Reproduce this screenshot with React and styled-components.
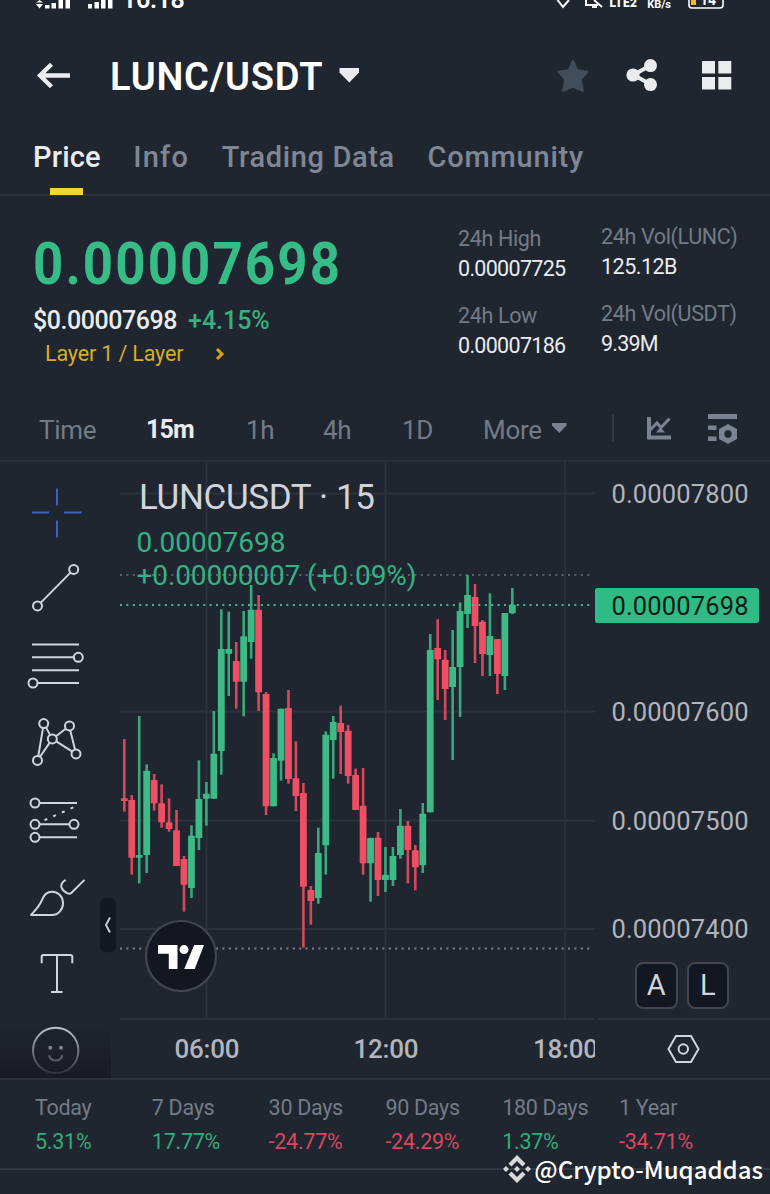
import React from "react";
import styled, { createGlobalStyle } from "styled-components";

const GlobalStyle = createGlobalStyle`
  * {
    box-sizing: border-box;
  }

  body {
    margin: 0;
    background: #1f262f;
  }
`;

const Screen = styled.div`
  position: relative;
  display: flex;
  flex-direction: column;
  width: 770px;
  height: 1194px;
  overflow: hidden;
  background: #1f262f;
  color: #eaecef;
  font-family: Roboto, "Liberation Sans", sans-serif;
  white-space: nowrap;
`;

const StatusBar = styled.div`
  display: flex;
  justify-content: space-between;
  height: 14px;
  padding: 0 44px 0 35px;
  overflow: hidden;
`;

const StatusGroup = styled.div`
  display: flex;
  align-items: flex-end;
  height: 14px;
`;

const StatusText = styled.span`
  margin-left: ${({ $left }) => $left}px;
  margin-bottom: ${({ $bottom }) => $bottom}px;
  font-size: ${({ $size }) => $size}px;
  font-weight: ${({ $weight }) => $weight || 700};
  line-height: 1;
  letter-spacing: ${({ $spacing }) => $spacing || 0}px;
  color: #fff;
`;

const Header = styled.header`
  display: flex;
  align-items: center;
  height: 124px;
  padding: 0 38px 0 36px;
`;

const Pair = styled.h1`
  margin: 2px 16px 0 38px;
  font-size: 38px;
  font-weight: 600;
  letter-spacing: 0.8px;
  color: #fff;
`;

const HeaderActions = styled.div`
  display: flex;
  align-items: center;
  margin-left: auto;
  gap: 35px;
`;

const Tabs = styled.nav`
  display: flex;
  gap: 32.5px;
  height: 58px;
  padding-left: 33px;
  border-bottom: 2px solid #2b323c;
`;

const Tab = styled.div`
  display: flex;
  flex-direction: column;
  align-items: center;
  justify-content: space-between;
  padding-top: 1px;
  font-size: 29px;
  font-weight: 500;
  line-height: 36px;
  letter-spacing: ${({ $spacing }) => $spacing}px;
  color: ${({ $active }) => ($active ? "#eaecef" : "#7f8795")};

  &::after {
    content: "";
    width: 33px;
    height: 7px;
    margin-bottom: -1px;
    background: ${({ $active }) => ($active ? "#f8d33a" : "transparent")};
  }
`;

const Summary = styled.section`
  display: flex;
  height: 203px;
  padding: 26px 0 0 33px;
`;

const PriceBlock = styled.div`
  display: flex;
  flex-direction: column;
  width: 425px;
  padding-top: 2px;
`;

const BigPrice = styled.div`
  height: 80px;
  font-size: 60px;
  font-weight: 700;
  line-height: 79px;
  letter-spacing: 2.4px;
  color: #36bd87;
  transform: scaleX(0.88);
  transform-origin: left;
`;

const SubPrice = styled.div`
  display: flex;
  gap: 11px;
  height: 34px;
  font-size: 25px;
  font-weight: 500;
  line-height: 33px;
  letter-spacing: -0.45px;
`;

const Change = styled.span`
  letter-spacing: -0.05px;
  color: #36b080;
`;

const CategoryLink = styled.div`
  display: flex;
  align-items: center;
  gap: 32px;
  height: 31px;
  padding-left: 12px;
  font-size: 21.5px;
  letter-spacing: -0.15px;
  color: #d9ac2c;
`;

const MetricColumn = styled.div`
  display: flex;
  flex-direction: column;
  gap: 18px;
  width: 143px;
  padding-top: ${({ $top }) => $top}px;
`;

const Metric = styled.div`
  font-size: 21.5px;
  line-height: 29.5px;
`;

const MetricLabel = styled.div`
  letter-spacing: ${({ $spacing }) => $spacing}px;
  color: #737b89;
`;

const MetricValue = styled.div`
  letter-spacing: ${({ $spacing }) => $spacing}px;
  color: #eaecef;
`;

const IntervalBar = styled.div`
  display: flex;
  align-items: center;
  height: 63px;
  padding-left: 39px;
  border-bottom: 2px solid #272e38;
`;

const Interval = styled.span`
  display: flex;
  align-items: center;
  gap: 10px;
  width: ${({ $width }) => $width}px;
  font-size: ${({ $active }) => ($active ? 25 : 26)}px;
  font-weight: ${({ $active }) => ($active ? 700 : 400)};
  letter-spacing: ${({ $active }) => ($active ? -0.9 : -0.3)}px;
  color: ${({ $active }) => ($active ? "#eaecef" : "#737b89")};

  svg {
    margin-bottom: 3px;
  }
`;

const Divider = styled.div`
  width: 2px;
  height: 26px;
  margin-right: 33px;
  margin-bottom: 3px;
  background: #323943;
`;

const IntervalTools = styled.div`
  display: flex;
  align-items: center;
  gap: 35px;
  margin-bottom: 2px;
`;

const ChartArea = styled.section`
  display: flex;
  height: 616px;
`;

const DrawTools = styled.aside`
  position: relative;
  width: 120px;
  padding-top: 11.6px;
  overflow: hidden;
`;

const ToolIcon = styled.svg`
  display: block;
  width: 120px;
  height: 76.85px;
  fill: none;
  stroke: ${({ $color }) => $color || "#d1d4dc"};
  stroke-width: 2;
`;

const ToolsFade = styled.div`
  position: absolute;
  left: 0;
  bottom: 0;
  width: 111px;
  height: 56px;
  background: linear-gradient(rgba(23, 26, 37, 0), rgba(23, 26, 37, 0.95));
`;

const CollapseHandle = styled.div`
  position: absolute;
  top: 435px;
  left: 99px;
  display: flex;
  align-items: center;
  justify-content: center;
  width: 18px;
  height: 56px;
  border: 1px solid #20222d;
  border-radius: 8px;
  background: #131722;
`;

const ChartPane = styled.div`
  position: relative;
  width: 650px;
`;

const ScaleButtons = styled.div`
  position: absolute;
  top: 500px;
  left: 515px;
  display: flex;
  gap: 9px;
`;

const ScaleButton = styled.div`
  width: 42.5px;
  height: 47px;
  border: 2px solid #434651;
  border-radius: 8px;
  background: #131722;
  font-size: 29px;
  line-height: 43px;
  text-align: center;
  color: #d1d4dc;
`;

const Periods = styled.section`
  display: flex;
  height: 92px;
  padding: 12px 0 0 35px;
  border-top: 2px solid #2b323c;
  border-bottom: 2px solid #323943;
`;

const Period = styled.div`
  width: 116.8px;
  font-size: 21.5px;
  line-height: 32px;
  letter-spacing: -0.3px;
  color: #737b89;
`;

const PeriodValue = styled.div`
  line-height: 35px;
  letter-spacing: -0.25px;
  color: ${({ $up }) => ($up ? "#33ab7c" : "#d8475f")};
`;

const Watermark = styled.div`
  position: absolute;
  right: 7px;
  bottom: 7px;
  display: flex;
  align-items: center;
  gap: 3px;
  font-family: "Noto Sans CJK SC", "Open Sans", sans-serif;
  font-size: 24px;
  font-weight: 500;
  line-height: 36px;
  color: #fff;
`;

const metricColumns = [
  {
    top: 2,
    items: [
      { label: "24h High", value: "0.00007725", ls: -0.35, vs: -0.7 },
      { label: "24h Low", value: "0.00007186", ls: -0.35, vs: -0.7 },
    ],
  },
  {
    top: 0,
    items: [
      { label: "24h Vol(LUNC)", value: "125.12B", ls: -0.35, vs: -0.5 },
      { label: "24h Vol(USDT)", value: "9.39M", ls: -0.35, vs: -0.8 },
    ],
  },
];

const periods = [
  ["Today", "5.31%"],
  ["7 Days", "17.77%"],
  ["30 Days", "-24.77%"],
  ["90 Days", "-24.29%"],
  ["180 Days", "1.37%"],
  ["1 Year", "-34.71%"],
];

// up/down, high, low, body top, body bottom, in thirds of a pixel below y 570
const candles = [
  [0, 507, 725, 685, 693],
  [0, 675, 914, 690, 863],
  [1, 438, 940, 855, 863],
  [1, 583, 909, 602, 855],
  [0, 612, 722, 630, 700],
  [0, 643, 773, 700, 757],
  [0, 685, 785, 757, 777],
  [0, 720, 888, 781, 888],
  [0, 858, 1025, 867, 944],
  [1, 766, 984, 797, 954],
  [1, 571, 840, 687, 804],
  [1, 636, 767, 671, 686],
  [1, 423, 686, 551, 686],
  [1, 118, 614, 237, 543],
  [1, 125, 378, 237, 251],
  [0, 216, 416, 273, 335],
  [1, 123, 439, 199, 335],
  [1, 45, 266, 119, 216],
  [0, 75, 423, 119, 367],
  [0, 366, 735, 372, 709],
  [1, 550, 709, 564, 709],
  [1, 416, 632, 416, 572],
  [0, 360, 641, 414, 627],
  [0, 514, 723, 625, 678],
  [0, 639, 1133, 669, 950],
  [0, 948, 1064, 960, 993],
  [1, 773, 1001, 849, 984],
  [1, 484, 914, 494, 826],
  [1, 438, 626, 456, 510],
  [0, 407, 612, 459, 486],
  [0, 465, 641, 482, 618],
  [0, 596, 720, 615, 720],
  [0, 594, 914, 707, 880],
  [1, 803, 995, 804, 880],
  [0, 786, 978, 803, 930],
  [1, 831, 966, 914, 930],
  [1, 831, 948, 858, 930],
  [1, 717, 866, 767, 855],
  [0, 753, 940, 767, 840],
  [0, 825, 961, 841, 892],
  [1, 699, 909, 731, 886],
  [1, 192, 727, 240, 727],
  [0, 148, 390, 234, 268],
  [0, 240, 450, 269, 357],
  [1, 180, 570, 291, 351],
  [1, 97, 441, 123, 291],
  [1, 15, 174, 75, 132],
  [0, 42, 279, 81, 168],
  [0, 150, 318, 155, 252],
  [1, 70, 318, 198, 255],
  [0, 207, 372, 207, 312],
  [1, 129, 360, 129, 318],
  [1, 54, 132, 104, 130],
];

const candleX = (i) => 124.3 + i * 7.462;
const candleY = (v) => 570 + v / 3;

const priceLabels = [
  ["0.00007800", 493.5],
  ["0.00007600", 711.5],
  ["0.00007500", 820.5],
  ["0.00007400", 929],
];

const timeLabels = [
  ["06:00", 206.5],
  ["12:00", 385.5],
  ["18:00", 565],
];

const Chart = () => (
  <svg
    width="650"
    height="616"
    viewBox="120 462 650 616"
    fontFamily="Roboto, sans-serif"
    style={{ display: "block" }}
  >
    <clipPath id="plot">
      <rect x="120" y="462" width="475" height="616" />
    </clipPath>
    <g stroke="#2b323c" strokeWidth="1.8">
      {priceLabels.map(([label, y]) => (
        <line key={label} x1="120" x2="595" y1={y} y2={y} />
      ))}
      {timeLabels.map(([label, x]) => (
        <line key={label} x1={x} x2={x} y1="462" y2="1019" />
      ))}
      <line x1="120" x2="594" y1="1019" y2="1019" />
      <line x1="598" x2="770" y1="1019" y2="1019" />
    </g>
    <g strokeWidth="2" strokeDasharray="2 4.4">
      <line x1="120" x2="592" y1="575" y2="575" stroke="#5c626c" />
      <line x1="120" x2="592" y1="948.4" y2="948.4" stroke="#7e848d" />
    </g>
    {candles.map(([up, high, low, top, bottom], i) => (
      <g key={i} fill={up ? "#3dba86" : "#ef4f65"}>
        <rect
          x={candleX(i) - 1.3}
          y={candleY(high)}
          width="2.6"
          height={(low - high) / 3}
          opacity="0.88"
        />
        <rect
          x={candleX(i) - 3.4}
          y={candleY(top)}
          width="6.8"
          height={(bottom - top) / 3}
          rx="0.6"
        />
      </g>
    ))}
    <line
      x1="120"
      x2="592"
      y1="605"
      y2="605"
      stroke="#45b98d"
      strokeWidth="2"
      strokeDasharray="2 4.4"
    />

    <text x="139" y="508.5" fontSize="35" textLength="236" fill="#d1d4dc">
      LUNCUSDT · 15
    </text>
    <g fontSize="28" fill="#36b184">
      <text x="136.500" y="552" textLength="149">
        0.00007698
      </text>
      <text x="136.500" y="585" textLength="280">
        +0.00000007 (+0.09%)
      </text>
    </g>

    <g fontSize="25.500" fill="#b2b5be">
      {priceLabels.map(([label, y]) => (
        <text key={label} x="611.500" y={y + 9} textLength="137">
          {label}
        </text>
      ))}
    </g>
    <rect x="595" y="588" width="164" height="35" rx="2.500" fill="#2fbc84" />
    <text x="611.500" y="614.500" fontSize="25.500" textLength="137" fill="#0d1915">
      0.00007698
    </text>

    <g clipPath="url(#plot)" fontSize="26" fontWeight="500" fill="#b2b5be">
      {timeLabels.map(([label, x]) => (
        <text key={label} x={x - 32} y="1057.500" textLength="65">
          {label}
        </text>
      ))}
    </g>

    <g fill="none" stroke="#d1d4dc" strokeWidth="2">
      <path d="M676 1036h15l7.500 13-7.500 13h-15l-7.500-13z" />
      <circle cx="683.300" cy="1049" r="4.700" />
    </g>

    <circle cx="181" cy="956" r="35" fill="#131722" stroke="#434651" strokeWidth="2.200" />
    <g fill="#fff">
      <path d="M158 945h19.500v24h-8.700v-15.200H158z" />
      <circle cx="184" cy="949.600" r="4.500" />
      <path d="M194.200 945H204l-9.300 24h-10.500z" />
    </g>
  </svg>
);

const DrawingTools = () => (
  <DrawTools>
    <ToolIcon viewBox="0 473.6 120 76.85" $color="#3e60c2">
      <path d="M57 488v17M57 520v17M32 512h17M64 512h17.500" />
    </ToolIcon>
    <ToolIcon viewBox="0 550.4 120 76.85">
      <circle cx="73.700" cy="569.800" r="4.500" />
      <circle cx="37.500" cy="606.300" r="4.500" />
      <path d="M40.800 603 70.500 573" />
    </ToolIcon>
    <ToolIcon viewBox="0 627.300 120 76.85">
      <path d="M32 644.700h47M32 657.600h41.500M32 670.500h47M37.500 683.300H79" />
      <circle cx="78.300" cy="657.600" r="4.500" />
      <circle cx="33" cy="683.300" r="4.500" />
    </ToolIcon>
    <ToolIcon viewBox="0 704.100 120 76.85">
      <circle cx="43.700" cy="723.700" r="4.500" />
      <circle cx="69.500" cy="726" r="4.500" />
      <circle cx="52.300" cy="739" r="4.500" />
      <circle cx="37.500" cy="760.500" r="4.500" />
      <circle cx="76" cy="754" r="4.500" />
      <path d="M43 728.200 38.300 756M46 727.500l4 7.500M56 736.300l9.700-7.500M70.300 730.500 75 749.500M49.800 742.700 40 756.800M56.200 741.400 72 751.500" />
    </ToolIcon>
    <ToolIcon viewBox="0 781 120 76.85">
      <circle cx="35" cy="803" r="4.500" />
      <circle cx="35" cy="824.300" r="4.500" />
      <circle cx="74" cy="824.300" r="4.500" />
      <circle cx="35" cy="837.300" r="4.500" />
      <path d="M39.500 803H77M39.500 824.300h30M39.500 837.300H77" />
      <path d="M44.500 820.200 75 806.700" strokeDasharray="3 6.500" />
    </ToolIcon>
    <ToolIcon viewBox="0 857.800 120 76.85" strokeLinejoin="round">
      <path d="M31 914.700H52c6.500 0 11-5.500 11-12s-5-11.200-11-11.200c-5 0-8 3-9.500 7.200-2.500 6.500-7 11.500-11.500 16z" />
      <path d="M65.800 879.700c-3.300 1.600-5.500 5-4.300 7.800 1 2.500 3.500 4.500 6 5.700 1.600.700 2.700.500 4-.600L84.500 879.700" />
    </ToolIcon>
    <ToolIcon viewBox="0 934.300 120 76.85">
      <path d="M41.700 962.500v-6.500c0-1.200.600-1.800 1.800-1.800h27c1.200 0 1.800.600 1.800 1.800v6.500M57 954.500v36.700M51 991.200h11.500" />
    </ToolIcon>
    <ToolIcon viewBox="0 1011.300 120 76.85">
      <circle cx="55.700" cy="1049.700" r="22.700" />
      <circle cx="50.300" cy="1047" r="1" />
      <circle cx="61" cy="1047" r="1" />
      <path d="M49 1054.500c1.500 7 12 7 13.300 0" />
    </ToolIcon>
    <ToolsFade />
    <CollapseHandle>
      <svg width="8" height="18" fill="none" stroke="#c5c8d0" strokeWidth="2">
        <path d="M6 1.500 2 9l4 7.500" />
      </svg>
    </CollapseHandle>
  </DrawTools>
);

const App = () => {
  return (
    <>
      <GlobalStyle />
      <Screen>
        <StatusBar>
          <StatusGroup>
            <svg width="78" height="14" fill="#fff">
              <path d="M1 2.500h7L4.500 0zM1 4h7L4.500 8.500zM10 5h4.500v3.500H10zM16.500 3H21v5.500h-4.500zM23.500 0H28v8.500h-4.500zM30.500 0H35v8.500h-4.500zM53 4h4v4.500h-4zM59.500 2h4.500v6.500h-4.500zM66 0h4.500v8.500H66zM73 0h4.500v8.500H73z" />
            </svg>
            <StatusText $left={9} $bottom={2} $size={25} $weight={600} $spacing={-0.3}>
              16:18
            </StatusText>
          </StatusGroup>
          <StatusGroup>
            <svg width="52" height="14" fill="none" stroke="#fff" strokeWidth="2">
              <path d="M1.500 0 7 7l6-7M30 0v5h12M36 7h5M38 0l8 7" />
            </svg>
            <StatusText $left={2} $bottom={5} $size={12} $weight={900} $spacing={0.3}>
              LTE2
            </StatusText>
            <StatusText $left={10} $bottom={4} $size={11}>
              KB/s
            </StatusText>
            <svg width="38" height="14" style={{ marginLeft: 17 }}>
              <path d="M1 0v5c0 2 1 3 3 3h28c2 0 3-1 3-3V0" fill="none" stroke="#fff" strokeWidth="1.600" />
              <path d="M3 0h5v5H3z" fill="#f3b42a" />
              <text x="12" y="5" fontSize="14" fontWeight="700" fill="#fff">
                14
              </text>
            </svg>
          </StatusGroup>
        </StatusBar>

        <Header>
          <svg width="36" height="30" fill="none" stroke="#eaecef" strokeWidth="4.400">
            <path d="M34 14.500H5M15.500 3.200 4 14.500l11.500 11.300" />
          </svg>
          <Pair>LUNC/USDT</Pair>
          <svg width="21" height="16" fill="#eaecef">
            <path d="M.500 0H20v4.500L10.300 14.500 .500 4.500z" />
          </svg>
          <HeaderActions>
            <svg width="34" height="34" fill="#434c5a" stroke="#434c5a" strokeWidth="2" strokeLinejoin="round">
              <path d="m17 2 4.300 9.300 10.200 1.500-6.600 7.500 2 11.500-9.900-4-9.900 4 2-11.500-6.600-7.500 10.200-1.500z" />
            </svg>
            <svg width="34" height="34" fill="#eaecef">
              <path d="M26 6 8.500 16 26 25.500" fill="none" stroke="#eaecef" strokeWidth="4" />
              <circle cx="8" cy="16" r="6.600" />
              <circle cx="25.500" cy="6.600" r="6.500" />
              <circle cx="25.500" cy="25.600" r="6.500" />
            </svg>
            <svg width="38" height="30" fill="#eaecef">
              <path d="M8 0h13v12.500H8zM24.300 0h13v12.500h-13zM8 16h13v12.500H8zM24.300 16h13v12.500h-13z" />
            </svg>
          </HeaderActions>
        </Header>

        <Tabs>
          <Tab $active $spacing={0.2}>Price</Tab>
          <Tab $spacing={1.2}>Info</Tab>
          <Tab $spacing={0.65}>Trading Data</Tab>
          <Tab $spacing={0.8}>Community</Tab>
        </Tabs>

        <Summary>
          <PriceBlock>
            <BigPrice>0.00007698</BigPrice>
            <SubPrice>
              <span>$0.00007698</span>
              <Change>+4.15%</Change>
            </SubPrice>
            <CategoryLink>
              Layer 1 / Layer
              <svg width="10" height="14" fill="none" stroke="#d9a01c" strokeWidth="3">
                <path d="m2 2 5 5-5 5" />
              </svg>
            </CategoryLink>
          </PriceBlock>
          {metricColumns.map((column) => (
            <MetricColumn key={column.top} $top={column.top}>
              {column.items.map((item) => (
                <Metric key={item.label}>
                  <MetricLabel $spacing={item.ls}>{item.label}</MetricLabel>
                  <MetricValue $spacing={item.vs}>{item.value}</MetricValue>
                </Metric>
              ))}
            </MetricColumn>
          ))}
        </Summary>

        <IntervalBar>
          <Interval $width={107}>Time</Interval>
          <Interval $width={100} $active>15m</Interval>
          <Interval $width={77}>1h</Interval>
          <Interval $width={79}>4h</Interval>
          <Interval $width={81}>1D</Interval>
          <Interval $width={129}>
            More
            <svg width="15" height="12" fill="#7b8291">
              <path d="M0 1h14.500v2.500L7.300 11 0 3.500z" />
            </svg>
          </Interval>
          <Divider />
          <IntervalTools>
            <svg width="25" height="26" fill="none" stroke="#7b8291">
              <path d="M2 1v20.500h22" strokeWidth="4" />
              <path d="m3 14 7-7 4 4.500 8.500-9" strokeWidth="3" />
              <path d="m13.500 11 4.500 5.500h-9z" fill="#7b8291" stroke="none" />
            </svg>
            <svg width="31" height="32" fill="#7b8291">
              <path d="M1 1h29v5H1zM1 12.500h8.500v4.500H1zM1 23.500h8.500V28H1z" />
              <path
                fillRule="evenodd"
                d="m21 11 9 5v10l-9 5-9-5V16zm0 6.300a3.700 3.700 0 1 0 0 7.400 3.700 3.700 0 0 0 0-7.400z"
              />
            </svg>
          </IntervalTools>
        </IntervalBar>

        <ChartArea>
          <DrawingTools />
          <ChartPane>
            <Chart />
            <ScaleButtons>
              <ScaleButton>A</ScaleButton>
              <ScaleButton>L</ScaleButton>
            </ScaleButtons>
          </ChartPane>
        </ChartArea>

        <Periods>
          {periods.map(([label, value]) => (
            <Period key={label}>
              {label}
              <PeriodValue $up={!value.startsWith("-")}>{value}</PeriodValue>
            </Period>
          ))}
        </Periods>

        <Watermark>
          <svg width="28" height="28" viewBox="0 0 28 28" fill="#d9d9d9">
            <path d="m14 0 8.500 8.500-3 3L14 6l-5.500 5.500-3-3zM14 28l8.500-8.500-3-3L14 22l-5.500-5.500-3 3zM3 11l3 3-3 3-3-3zM25 11l3 3-3 3-3-3zM14 11l3 3-3 3-3-3z" />
          </svg>
          @Crypto-Muqaddas
        </Watermark>
      </Screen>
    </>
  );
};

export default App;
